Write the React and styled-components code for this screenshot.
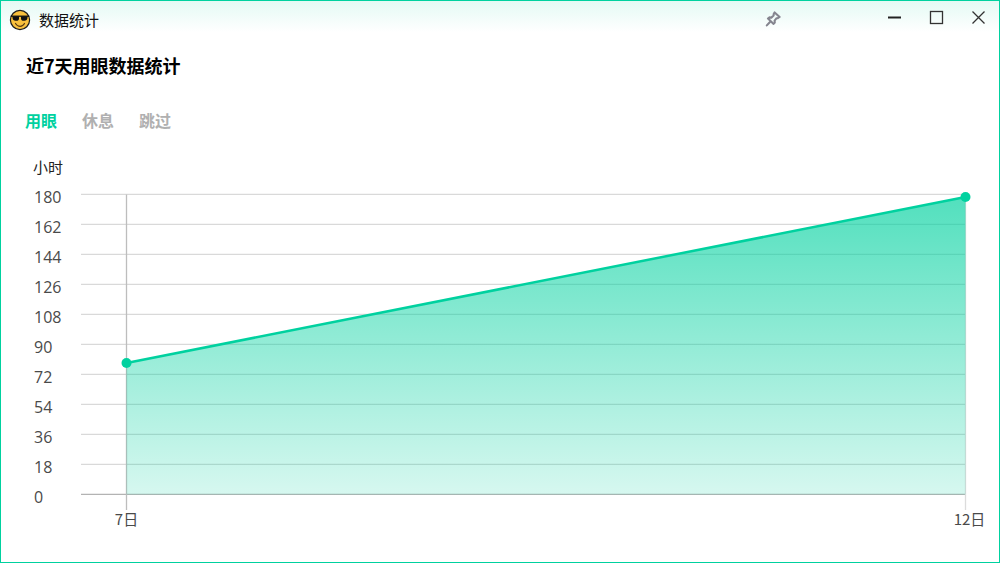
import React from "react";
import styled, { createGlobalStyle } from "styled-components";

const GlobalStyle = createGlobalStyle`
  html, body {
    margin: 0;
    padding: 0;
    background: #fff;
  }
  body {
    font-family: "Noto Sans CJK SC", "Open Sans", sans-serif;
  }
`;

const Window = styled.div`
  box-sizing: border-box;
  width: 1000px;
  height: 563px;
  border: 1px solid #00d19f;
  background: #fff;
  overflow: hidden;
  display: flex;
  flex-direction: column;
`;

const TitleBar = styled.div`
  display: flex;
  align-items: center;
  height: 39px;
  flex: none;
  padding: 0 0 2px 8px;
  box-sizing: border-box;
  background: linear-gradient(to bottom, #e4faf4, #ffffff 80%);
`;

const AppName = styled.span`
  margin-left: 8px;
  font-size: 15px;
  color: #111;
`;

const PinButton = styled.div`
  margin-left: auto;
  margin-right: 92px;
  display: flex;
  margin-top: -1px;
`;

const WinButton = styled.div`
  width: 42px;
  display: flex;
  justify-content: center;
  margin-top: -4px;
`;

const Content = styled.div`
  flex: 1;
  padding: 0 0 0 24px;
`;

const Heading = styled.h1`
  margin: 11px 0 0 1px;
  font-size: 18px;
  line-height: 28px;
  font-weight: 700;
  color: #000;
`;

const Tabs = styled.div`
  display: flex;
  gap: 25px;
  margin-top: 29px;
`;

const Tab = styled.span`
  font-size: 16px;
  line-height: 24px;
  font-weight: 700;
  color: ${(p) => (p.$active ? "#00d19f" : "#b0b0b0")};
`;

const Chart = styled.svg`
  display: block;
  margin: 18px 0 0 -24px;
`;

const ticks = [180, 162, 144, 126, 108, 90, 72, 54, 36, 18, 0];

const AppIcon = () => (
  <svg width="22" height="22" viewBox="0 0 22 22">
    <circle cx="11" cy="11" r="9.6" fill="#f8c03c" stroke="#1d1d1d" strokeWidth="1.2" />
    <path d="M1.8 7.2h18.4" stroke="#111" strokeWidth="1.3" />
    <path d="M3.5 7.2h6.5v2.2c0 1.4-1 2.3-2.6 2.3H6.6c-1.7 0-3.1-1.2-3.1-3zM12 7.2h6.5v1.5c0 1.8-1.4 3-3.1 3h-.8c-1.6 0-2.6-.9-2.6-2.3z" fill="#111" />
    <path d="M6.5 14.5c1.2 2 3 2.8 4.7 2.8s3.2-.8 4.3-2.8" fill="none" stroke="#5a3a10" strokeWidth="1.2" strokeLinecap="round" />
  </svg>
);

const PinIcon = () => (
  <svg width="16" height="16" viewBox="0 0 16 16" fill="none" stroke="#85858f" strokeWidth="2.1" strokeLinejoin="round">
    <path d="M9.6 1.4l5 4.6-1.8 1.2-1.2 0-2 2.4.2 2-1.2 1.3L3 7.6l1.3-1.2 2 .2 2.3-2.1.1-1.4z" />
    <path d="M5 11L1.8 14.4" strokeLinecap="round" />
  </svg>
);

const MinIcon = () => (
  <svg width="15" height="15" viewBox="0 0 15 15">
    <path d="M1 7.5h13" stroke="#222" strokeWidth="2" />
  </svg>
);

const MaxIcon = () => (
  <svg width="15" height="15" viewBox="0 0 15 15">
    <rect x="1.5" y="1.5" width="12" height="12" fill="none" stroke="#333" strokeWidth="1.3" />
  </svg>
);

const CloseIcon = () => (
  <svg width="15" height="15" viewBox="0 0 15 15">
    <path d="M1.5 1.5l12 12M13.5 1.5l-12 12" stroke="#333" strokeWidth="1.3" />
  </svg>
);

const Plot = () => {
  // svg origin is window (1, 150)
  const y = (v) => 44.3 + (180 - v) * (300 / 180);
  const x0 = 125.5;
  const x1 = 964.5;
  const y0 = 213;
  const y1 = 47;
  return (
    <Chart width="998" height="390" viewBox="0 0 998 390">
      <defs>
        <linearGradient id="area" x1="0" y1="47" x2="0" y2="344.5" gradientUnits="userSpaceOnUse">
          <stop offset="0" stopColor="#00d19f" stopOpacity="0.68" />
          <stop offset="1" stopColor="#00d19f" stopOpacity="0.16" />
        </linearGradient>
      </defs>
      <text x="32" y="23" fontSize="15" fill="#222">小时</text>
      {ticks.map((t) => (
        <g key={t}>
          <line x1="80" x2="964.5" y1={y(t)} y2={y(t)} stroke={t === 0 ? "#b3b3b3" : "#d9d9d9"} strokeWidth="1.3" />
          <text x="33" y={y(t) + 9} fontSize="16" fill="#4a4a4a" fontFamily="'Open Sans', sans-serif">{t}</text>
        </g>
      ))}
      <line x1={x0} x2={x0} y1="44.5" y2="360" stroke="#bdbdbd" strokeWidth="1.3" />
      <line x1={x1} x2={x1} y1="44.5" y2="360" stroke="#dcdcdc" strokeWidth="1.3" />
      <polygon points={`${x0},${y0} ${x1},${y1} ${x1},344.5 ${x0},344.5`} fill="url(#area)" />
      <polyline points={`${x0},${y0} ${x1},${y1}`} fill="none" stroke="#00d19f" strokeWidth="2.5" />
      <circle cx={x0} cy={y0} r="5" fill="#00d19f" />
      <circle cx={x1} cy={y1} r="5" fill="#00d19f" />
      <text x={x0} y="375" fontSize="15" fill="#4a4a4a" textAnchor="middle">7日</text>
      <text x="968.5" y="375" fontSize="15" fill="#4a4a4a" textAnchor="middle">12日</text>
    </Chart>
  );
};

export default function App() {
  return (
    <>
      <GlobalStyle />
      <Window>
        <TitleBar>
          <AppIcon />
          <AppName>数据统计</AppName>
          <PinButton><PinIcon /></PinButton>
          <WinButton><MinIcon /></WinButton>
          <WinButton><MaxIcon /></WinButton>
          <WinButton><CloseIcon /></WinButton>
        </TitleBar>
        <Content>
          <Heading>近7天用眼数据统计</Heading>
          <Tabs>
            <Tab $active>用眼</Tab>
            <Tab>休息</Tab>
            <Tab>跳过</Tab>
          </Tabs>
          <Plot />
        </Content>
      </Window>
    </>
  );
}
